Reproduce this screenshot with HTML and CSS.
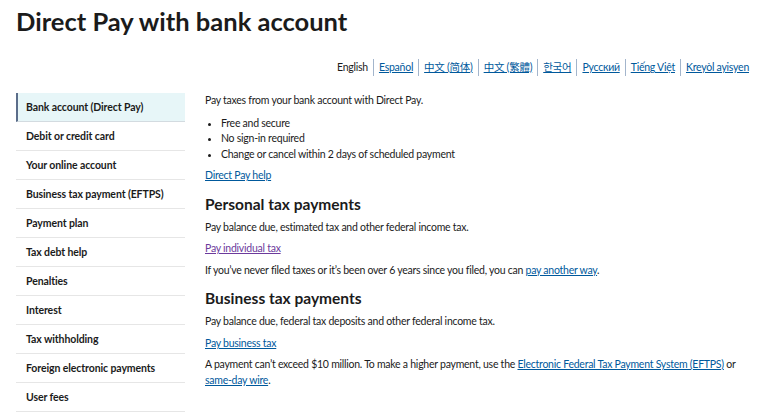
FILE: index.html
```html
<!DOCTYPE html>
<html lang="en">
<head>
    <meta charset="UTF-8">
    <meta name="viewport" content="width=device-width, initial-scale=1.0">
    <title>Direct Pay with bank account</title>
    <link rel="stylesheet" href="styles.css">
</head>
<body>
    <h1>Direct Pay with bank account</h1>

    <ul class="languages">
        <li><span class="current">English</span></li>
        <li><a href="#" lang="es">Español</a></li>
        <li><a href="#" lang="zh-Hans">中文 (简体)</a></li>
        <li><a href="#" lang="zh-Hant">中文 (繁體)</a></li>
        <li><a href="#" lang="ko">한국어</a></li>
        <li><a href="#" lang="ru">Русский</a></li>
        <li><a href="#" lang="vi">Tiếng Việt</a></li>
        <li><a href="#" lang="ht">Kreyòl ayisyen</a></li>
    </ul>

    <div class="layout">
        <nav class="sidenav">
            <a href="#" class="active">Bank account (Direct Pay)</a>
            <a href="#">Debit or credit card</a>
            <a href="#">Your online account</a>
            <a href="#">Business tax payment (EFTPS)</a>
            <a href="#">Payment plan</a>
            <a href="#">Tax debt help</a>
            <a href="#">Penalties</a>
            <a href="#">Interest</a>
            <a href="#">Tax withholding</a>
            <a href="#">Foreign electronic payments</a>
            <a href="#">User fees</a>
        </nav>

        <main class="content">
            <p>Pay taxes from your bank account with Direct Pay.</p>
            <ul class="bullets">
                <li>Free and secure</li>
                <li>No sign-in required</li>
                <li>Change or cancel within 2 days of scheduled payment</li>
            </ul>
            <p><a href="#">Direct Pay help</a></p>

            <h2>Personal tax payments</h2>
            <p>Pay balance due, estimated tax and other federal income tax.</p>
            <p><a href="#" class="visited">Pay individual tax</a></p>
            <p>If you’ve never filed taxes or it’s been over 6 years since you filed, you can <a href="#">pay another way</a>.</p>

            <h2>Business tax payments</h2>
            <p>Pay balance due, federal tax deposits and other federal income tax.</p>
            <p><a href="#">Pay business tax</a></p>
            <p>A payment can’t exceed $10 million. To make a higher payment, use the <a href="#">Electronic Federal Tax Payment System (EFTPS)</a> or <a href="#">same-day wire</a>.</p>
        </main>
    </div>
</body>
</html>
```

FILE: styles.css
```css
body {
    font-family: Lato, "Noto Sans", "Noto Sans CJK SC", "Noto Sans CJK KR", sans-serif;
    font-size: 10.5px;
    line-height: 16px;
    letter-spacing: -0.25px;
    color: #1b1b1b;
    background: #fff;
    margin: 0;
    padding: 0 16px;
}
a {
    color: #00599c;
}
a.visited {
    color: #6c3a9c;
}
h1 {
    font-size: 25.5px;
    line-height: 36px;
    font-weight: 700;
    letter-spacing: 0;
    margin: 3px 0 0;
}
.languages {
    list-style: none;
    display: flex;
    justify-content: flex-end;
    margin: 20px 3px 0 0;
    padding: 0;
}
.languages li {
    padding: 0 5px;
    border-left: 1px solid #a3b5cc;
    line-height: 17px;
}
.languages li:first-child {
    border-left: none;
}
.languages li:last-child {
    padding-right: 0;
}
.layout {
    display: flex;
    gap: 20px;
    margin-top: 16px;
}
.sidenav {
    width: 169px;
    flex-shrink: 0;
    display: flex;
    flex-direction: column;
    padding-top: 1px;
}
.sidenav a {
    display: block;
    height: 28px;
    line-height: 28px;
    padding-left: 10px;
    border-bottom: 1px solid #e6e6e6;
    color: #1b1b1b;
    font-weight: 700;
    letter-spacing: -0.1px;
    text-decoration: none;
}
.sidenav a.active {
    background: #e7f6f8;
    border-left: 2px solid #5b6d8a;
    padding-left: 8px;
    border-bottom-color: #d3dbe0;
}
.content {
    flex: 1;
}
.content p {
    margin: 0 0 5.5px;
}
.bullets {
    margin: 7.5px 0 5px;
    padding-left: 16px;
}
.bullets li {
    line-height: 15.5px;
}
h2 {
    font-size: 15.5px;
    line-height: 20px;
    font-weight: 700;
    letter-spacing: 0;
    margin: 10.5px 0 5px;
}
```
